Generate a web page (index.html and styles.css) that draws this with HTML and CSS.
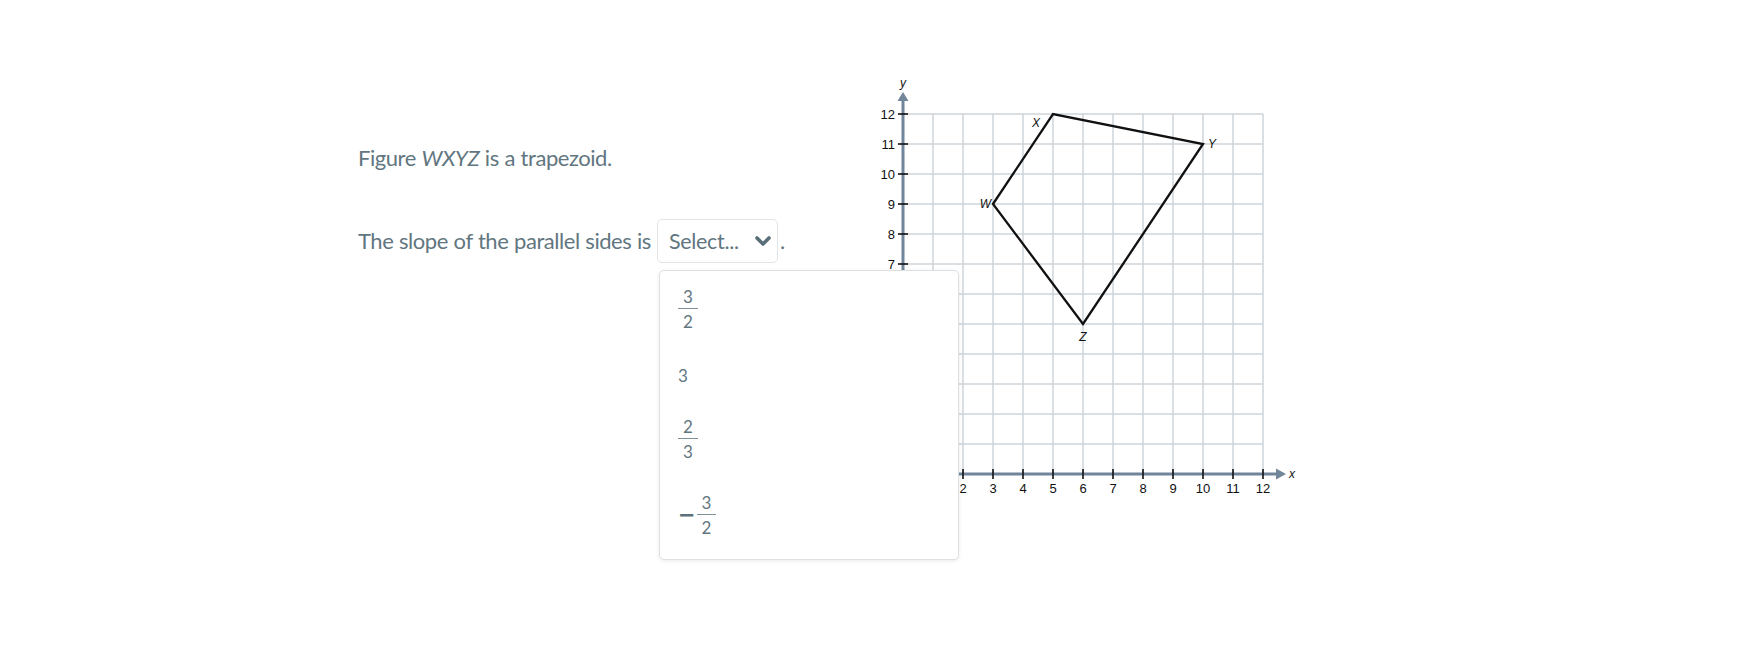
FILE: index.html
```html
<!DOCTYPE html>
<html lang="en">
<head>
<meta charset="utf-8">
<title>Trapezoid slope</title>
<link rel="stylesheet" href="styles.css">
</head>
<body>
<div class="page">
  <div class="question">
    <p class="line line-first">Figure&nbsp;<i class="var">WXYZ</i>&nbsp;is a trapezoid.</p>
    <div class="line line-select">
      <span>The slope of the parallel sides is</span>
      <span class="select-wrap">
        <span class="select">
          <span class="select-label">Select...</span>
          <svg class="chevron" viewBox="0 0 16 10" width="16" height="10"><path d="M2 2 L8 8 L14 2" fill="none" stroke="#5b6f7a" stroke-width="3.6" stroke-linecap="round" stroke-linejoin="round"/></svg>
        </span>
        <div class="menu">
          <div class="opt opt-frac"><span class="frac"><span class="num">3</span><span class="den">2</span></span></div>
          <div class="opt opt-plain">3</div>
          <div class="opt opt-frac"><span class="frac"><span class="num">2</span><span class="den">3</span></span></div>
          <div class="opt opt-frac"><span class="minus">−</span><span class="frac"><span class="num">3</span><span class="den">2</span></span></div>
        </div>
      </span>
      <span class="period">.</span>
    </div>
  </div>
  <svg class="graph" width="440" height="440" viewBox="0 0 440 440">
    <g class="grid" stroke="#cdd5d9" stroke-width="1.5">
      <line x1="73" y1="44" x2="73" y2="404"/><line x1="103" y1="44" x2="103" y2="404"/>
      <line x1="133" y1="44" x2="133" y2="404"/><line x1="163" y1="44" x2="163" y2="404"/>
      <line x1="193" y1="44" x2="193" y2="404"/><line x1="223" y1="44" x2="223" y2="404"/>
      <line x1="253" y1="44" x2="253" y2="404"/><line x1="283" y1="44" x2="283" y2="404"/>
      <line x1="313" y1="44" x2="313" y2="404"/><line x1="343" y1="44" x2="343" y2="404"/>
      <line x1="373" y1="44" x2="373" y2="404"/><line x1="403" y1="44" x2="403" y2="404"/>
      <line x1="43" y1="374" x2="403" y2="374"/><line x1="43" y1="344" x2="403" y2="344"/>
      <line x1="43" y1="314" x2="403" y2="314"/><line x1="43" y1="284" x2="403" y2="284"/>
      <line x1="43" y1="254" x2="403" y2="254"/><line x1="43" y1="224" x2="403" y2="224"/>
      <line x1="43" y1="194" x2="403" y2="194"/><line x1="43" y1="164" x2="403" y2="164"/>
      <line x1="43" y1="134" x2="403" y2="134"/><line x1="43" y1="104" x2="403" y2="104"/>
      <line x1="43" y1="74" x2="403" y2="74"/><line x1="43" y1="44" x2="403" y2="44"/>
    </g>
    <g class="axes" stroke="#71869a" stroke-width="3">
      <line x1="43" y1="420" x2="43" y2="30"/>
      <line x1="28" y1="404" x2="418" y2="404"/>
    </g>
    <polygon points="43,22 37.5,31 48.5,31" fill="#71869a"/>
    <polygon points="426,404 416,398.5 416,409.5" fill="#71869a"/>
    <g class="ticks" stroke="#111" stroke-width="1.6">
      <line x1="38" y1="374" x2="48" y2="374"/><line x1="38" y1="344" x2="48" y2="344"/>
      <line x1="38" y1="314" x2="48" y2="314"/><line x1="38" y1="284" x2="48" y2="284"/>
      <line x1="38" y1="254" x2="48" y2="254"/><line x1="38" y1="224" x2="48" y2="224"/>
      <line x1="38" y1="194" x2="48" y2="194"/><line x1="38" y1="164" x2="48" y2="164"/>
      <line x1="38" y1="134" x2="48" y2="134"/><line x1="38" y1="104" x2="48" y2="104"/>
      <line x1="38" y1="74" x2="48" y2="74"/><line x1="38" y1="44" x2="48" y2="44"/>
      <line x1="73" y1="399" x2="73" y2="409"/><line x1="103" y1="399" x2="103" y2="409"/>
      <line x1="133" y1="399" x2="133" y2="409"/><line x1="163" y1="399" x2="163" y2="409"/>
      <line x1="193" y1="399" x2="193" y2="409"/><line x1="223" y1="399" x2="223" y2="409"/>
      <line x1="253" y1="399" x2="253" y2="409"/><line x1="283" y1="399" x2="283" y2="409"/>
      <line x1="313" y1="399" x2="313" y2="409"/><line x1="343" y1="399" x2="343" y2="409"/>
      <line x1="373" y1="399" x2="373" y2="409"/><line x1="403" y1="399" x2="403" y2="409"/>
    </g>
    <g class="ylabels" text-anchor="end">
      <text x="35" y="378.5">1</text><text x="35" y="348.5">2</text><text x="35" y="318.5">3</text>
      <text x="35" y="288.5">4</text><text x="35" y="258.5">5</text><text x="35" y="228.5">6</text>
      <text x="35" y="198.5">7</text><text x="35" y="168.5">8</text><text x="35" y="138.5">9</text>
      <text x="35" y="108.5">10</text><text x="35" y="78.5">11</text><text x="35" y="48.5">12</text>
    </g>
    <g class="xlabels" text-anchor="middle">
      <text x="73" y="423">1</text><text x="103" y="423">2</text><text x="133" y="423">3</text>
      <text x="163" y="423">4</text><text x="193" y="423">5</text><text x="223" y="423">6</text>
      <text x="253" y="423">7</text><text x="283" y="423">8</text><text x="313" y="423">9</text>
      <text x="343" y="423">10</text><text x="373" y="423">11</text><text x="403" y="423">12</text>
    </g>
    <text class="axis-name" x="43" y="17" text-anchor="middle">y</text>
    <text class="axis-name" x="429" y="408">x</text>
    <polygon points="133,134 193,44 343,74 223,254" fill="none" stroke="#111" stroke-width="2.3" stroke-linejoin="miter"/>
    <text class="pt" x="131" y="138" text-anchor="end">W</text>
    <text class="pt" x="172" y="57">X</text>
    <text class="pt" x="348" y="78">Y</text>
    <text class="pt" x="223" y="271" text-anchor="middle">Z</text>
  </svg>
</div>
</body>
</html>
```
FILE: styles.css
```css
html, body {
  margin: 0;
  padding: 0;
  background: #ffffff;
}
body {
  min-height: 668px;
  font-family: "Lato", "Liberation Sans", sans-serif;
  color: #62767f;
}
.page {
  display: flex;
  align-items: flex-start;
  min-height: 598px;
  padding: 70px 0 0 358px;
}
.question {
  width: 502px;
  padding-top: 73px;
  font-size: 22px;
  line-height: 30px;
  letter-spacing: -0.45px;
  word-spacing: 0.5px;
}
.line {
  margin: 0;
}
.var {
  font-style: italic;
}
.line-select {
  display: flex;
  align-items: center;
  margin-top: 46px;
  height: 44px;
  white-space: nowrap;
}
.select-wrap {
  position: relative;
  margin-left: 6px;
  letter-spacing: 0;
  word-spacing: 0;
}
.select {
  box-sizing: border-box;
  display: flex;
  align-items: center;
  width: 121px;
  height: 44px;
  padding: 0 6px 0 11px;
  border: 1.5px solid #e2e5e7;
  border-radius: 5px;
  justify-content: space-between;
}
.select-label {
  font-size: 21.5px;
  letter-spacing: -0.3px;
}
.chevron {
  display: block;
}
.period {
  margin-left: 2px;
}
.menu {
  position: absolute;
  z-index: 5;
  left: 2px;
  top: 51px;
  box-sizing: border-box;
  width: 300px;
  height: 290px;
  background: #ffffff;
  border: 1px solid #dde1e3;
  border-radius: 5px;
  box-shadow: 0 1px 4px rgba(0, 0, 0, 0.08);
  font-size: 17px;
  line-height: 19px;
}
.opt {
  display: flex;
  align-items: center;
  padding: 0 18px;
}
.opt-frac {
  height: 76px;
}
.opt-plain {
  height: 54px;
  padding-top: 2px;
  box-sizing: border-box;
}
.frac {
  display: inline-flex;
  flex-direction: column;
  align-items: stretch;
  text-align: center;
}
.num {
  padding: 0 5px 2px;
  border-bottom: 1px solid #7e8f98;
}
.den {
  padding: 3px 5px 0;
}
.minus {
  margin-right: 1px;
  font-family: "DejaVu Sans", sans-serif;
  font-size: 21px;
  line-height: 19px;
  font-weight: bold;
  color: #5d717b;
}
.graph {
  display: block;
  position: relative;
  z-index: 1;
  font-family: "Liberation Sans", Arial, sans-serif;
  font-size: 13px;
  fill: #111;
}
.graph .axis-name,
.graph .pt {
  font-style: italic;
  font-size: 12px;
}
```
